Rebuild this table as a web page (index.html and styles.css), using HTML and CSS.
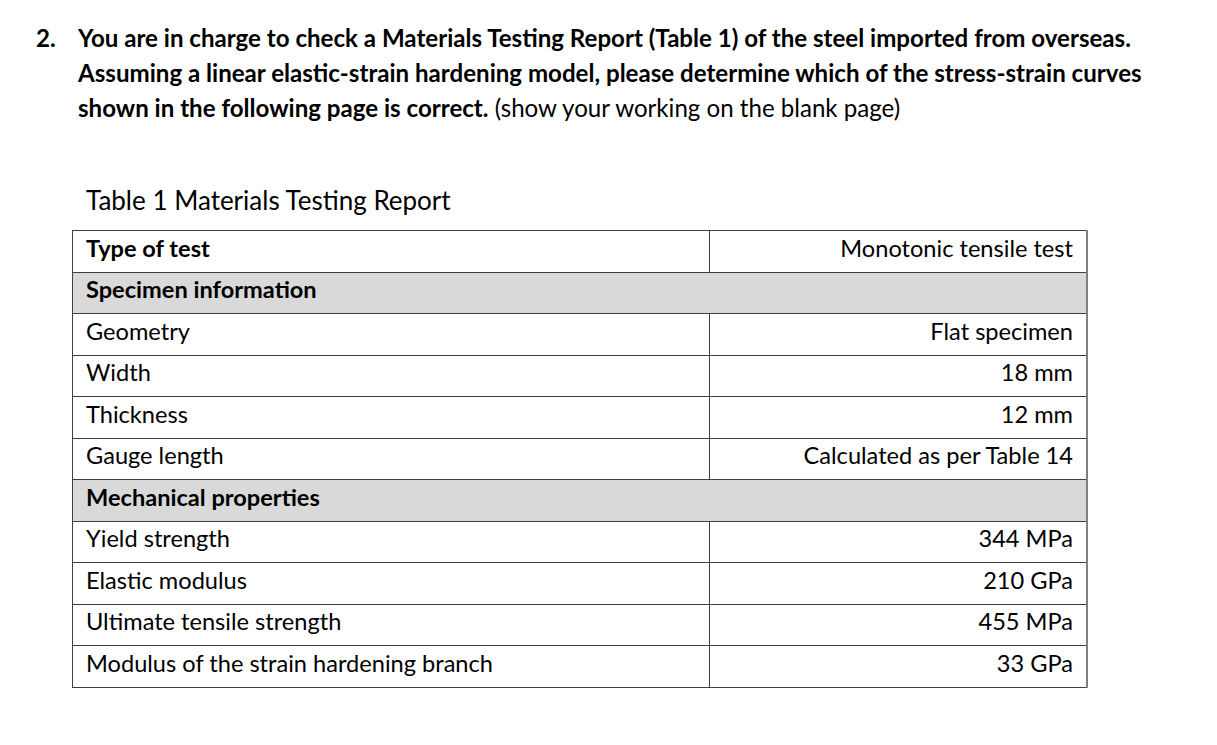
FILE: index.html
```html
<!DOCTYPE html>
<html>
<head>
<meta charset="utf-8">
<link rel="stylesheet" href="styles.css">
</head>
<body>
<div class="page">
  <div class="question">
    <div class="qnum">2.</div>
    <div class="qtext">
      <p class="line"><b>You are in charge to check a Materials Testing Report (Table 1) of the steel imported from overseas.</b></p>
      <p class="line"><b>Assuming a linear elastic-strain hardening model, please determine which of the stress-strain curves</b></p>
      <p class="line"><b>shown in the following page is correct.</b> (show your working on the blank page)</p>
    </div>
  </div>
  <div class="caption">Table 1 Materials Testing Report</div>
  <table class="report">
    <tr><td class="label bold">Type of test</td><td class="value">Monotonic tensile test</td></tr>
    <tr class="section"><td colspan="2" class="label bold">Specimen information</td></tr>
    <tr><td class="label">Geometry</td><td class="value">Flat specimen</td></tr>
    <tr><td class="label">Width</td><td class="value">18 mm</td></tr>
    <tr><td class="label">Thickness</td><td class="value">12 mm</td></tr>
    <tr><td class="label">Gauge length</td><td class="value">Calculated as per Table 14</td></tr>
    <tr class="section"><td colspan="2" class="label bold">Mechanical properties</td></tr>
    <tr><td class="label">Yield strength</td><td class="value">344 MPa</td></tr>
    <tr><td class="label">Elastic modulus</td><td class="value">210 GPa</td></tr>
    <tr><td class="label">Ultimate tensile strength</td><td class="value">455 MPa</td></tr>
    <tr><td class="label">Modulus of the strain hardening branch</td><td class="value">33 GPa</td></tr>
  </table>
</div>
</body>
</html>
```
FILE: styles.css
```css
html, body {
  margin: 0;
  padding: 0;
  background: #ffffff;
}
body {
  font-family: "Lato", "Open Sans", sans-serif;
  color: #000000;
}
.page {
  padding: 20px 0 0 36px;
}
.question {
  display: flex;
  font-size: 24.1px;
  line-height: 35px;
}
.qnum {
  width: 42px;
  font-weight: bold;
}
.qtext .line {
  margin: 0;
  white-space: nowrap;
}
.caption {
  margin: 57px 0 12px 50px;
  font-size: 26px;
  line-height: 36px;
}
.report {
  margin: 0 0 0 36px;
  border-collapse: collapse;
  width: 1016px;
  font-size: 23.6px;
}
.report td {
  border: 1px solid #3f3f3f;
  height: 41.5px;
  padding: 0 13px 7px;
  box-sizing: border-box;
  line-height: 26px;
}
.report td.label {
  width: 637px;
  text-align: left;
}
.report td.value {
  text-align: right;
}
.report .bold {
  font-weight: bold;
}
.report tr.section td {
  background: #d9d9d9;
}
.report tr td:last-child {
  border-right: 2px solid #808080;
}
```
